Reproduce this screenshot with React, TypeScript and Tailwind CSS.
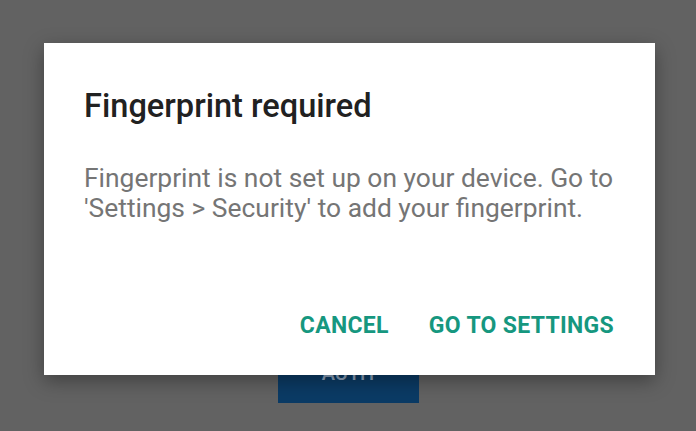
export default function App() {
  return (
    <div className="relative h-[431px] w-[696px] overflow-hidden bg-[#626262] font-['Roboto',sans-serif]">
      {/* Page content behind the dialog */}
      <div className="flex h-full flex-col items-center justify-end pb-[28px]">
        <button className="flex h-[58px] w-[141px] items-start justify-center bg-[#0b3b65] pt-[16px] text-[20px] font-medium leading-[24px] text-[#8fa5bd]">
          AUTH
        </button>
      </div>

      {/* Dialog */}
      <div className="absolute left-[44px] top-[43px] flex h-[332px] w-[611px] flex-col bg-white pl-[40px] pr-[30px] shadow-[0_6px_18px_rgba(0,0,0,0.35)]">
        <h2 className="mt-[44px] whitespace-nowrap text-[32.6px] font-medium leading-[38px] text-[#212121]">
          Fingerprint required
        </h2>
        <p className="mt-[38px] whitespace-nowrap text-[26.4px] leading-[30px] text-[#757575]">
          Fingerprint is not set up on your device. Go to
          <br />
          'Settings &gt; Security' to add your fingerprint.
        </p>
        <div className="mt-auto mb-[36px] flex justify-end gap-[40px] pr-[11px]">
          <button className="text-[23px] font-bold leading-[27px] tracking-[0.3px] text-[#16977f]">CANCEL</button>
          <button className="text-[23px] font-bold leading-[27px] tracking-[0.3px] text-[#16977f]">GO TO SETTINGS</button>
        </div>
      </div>
    </div>
  );
}
